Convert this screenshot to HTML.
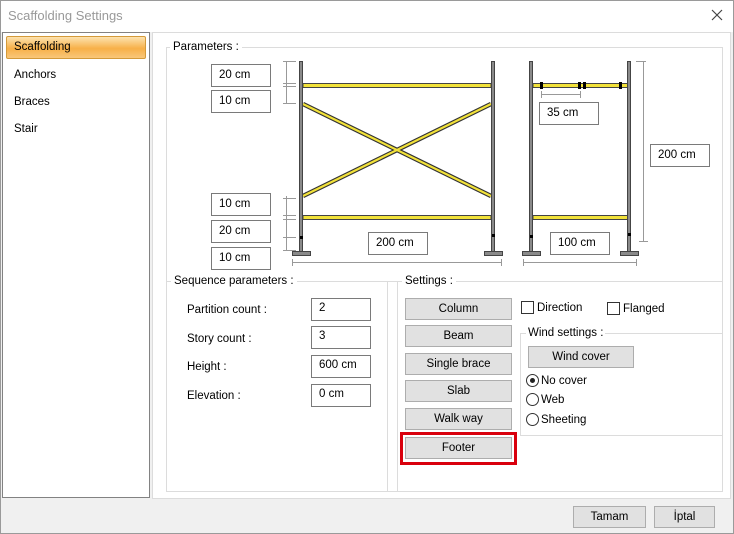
<!DOCTYPE html>
<html><head><style>
*{margin:0;padding:0;box-sizing:border-box}
body{width:734px;height:534px;overflow:hidden;font-family:"Liberation Sans",sans-serif;font-size:11.5px;color:#000;background:#f0f0f0;position:relative}
.a{position:absolute}
.title{position:absolute;left:0;top:0;width:734px;height:32px;background:#fff}
.tb{position:absolute;background:#fff;border:1px solid #7a7a7a;padding:4px 0 0 7px;height:23px;font-size:11.5px}
.grp{position:absolute;border:1px solid #dcdcdc}
.btn{position:absolute;background:#e1e1e1;border:1px solid #adadad;text-align:center;font-size:11.5px}
.cb{position:absolute;width:13px;height:13px;border:1px solid #333;background:#fff}
.rd{position:absolute;width:13px;height:13px;border:1px solid #333;border-radius:50%;background:#fff}
</style></head><body>
<div class="title"></div>
<div class="a" style="left:8px;top:8px;font-size:13px;color:#999">Scaffolding Settings</div>
<svg class="a" style="left:711px;top:9px" width="12" height="12"><path d="M1 1L11 11M11 1L1 11" stroke="#444" stroke-width="1.2"/></svg>
<!-- left list -->
<div class="a" style="left:2px;top:32px;width:148px;height:466px;background:#fff;border:1px solid #828282"></div>
<div class="a" style="left:6px;top:36px;width:140px;height:23px;border:1px solid #d49a3a;border-radius:2px;background:linear-gradient(#fde3b0,#f7b048 55%,#f9c77a)"></div>
<div class="a" style="left:14px;top:41px">Scaffolding</div>
<div class="a" style="left:14px;top:69px">Anchors</div>
<div class="a" style="left:14px;top:96px">Braces</div>
<div class="a" style="left:14px;top:123px">Stair</div>
<!-- right panel -->
<div class="a" style="left:152px;top:32px;width:579px;height:467px;background:#fff;border:1px solid #dcdcdc"></div>
<div class="grp" style="left:166px;top:47px;width:557px;height:445px"></div>
<div class="a" style="left:170px;top:41px;background:#fff;padding:0 3px">Parameters :</div>
<div class="a" style="left:166px;top:281px;width:557px;height:1px;background:#dcdcdc"></div>
<div class="a" style="left:387px;top:281px;width:1px;height:211px;background:#dcdcdc"></div>
<div class="a" style="left:397px;top:281px;width:1px;height:211px;background:#dcdcdc"></div>
<div class="a" style="left:171px;top:275px;background:#fff;padding:0 3px">Sequence parameters :</div>
<div class="a" style="left:402px;top:275px;background:#fff;padding:0 3px">Settings :</div>

<svg class="a" style="left:0;top:0" width="734" height="534">
<g stroke="#999" stroke-width="1" fill="none">
<line x1="286.5" y1="61" x2="286.5" y2="104"/><line x1="286.5" y1="196" x2="286.5" y2="251"/>
<line x1="283" y1="61.5" x2="296" y2="61.5"/><line x1="283" y1="83.5" x2="296" y2="83.5"/><line x1="283" y1="86.5" x2="296" y2="86.5"/><line x1="283" y1="103.5" x2="296" y2="103.5"/>
<line x1="283" y1="198.5" x2="296" y2="198.5"/><line x1="283" y1="215.5" x2="296" y2="215.5"/><line x1="283" y1="219.5" x2="296" y2="219.5"/><line x1="283" y1="237.5" x2="296" y2="237.5"/><line x1="283" y1="250.5" x2="296" y2="250.5"/>
<line x1="292" y1="262.5" x2="502" y2="262.5"/><line x1="292.5" y1="259" x2="292.5" y2="266"/><line x1="501.5" y1="259" x2="501.5" y2="266"/>
<line x1="523" y1="262.5" x2="637" y2="262.5"/><line x1="523.5" y1="259" x2="523.5" y2="266"/><line x1="636.5" y1="259" x2="636.5" y2="266"/>
<line x1="643.5" y1="61" x2="643.5" y2="242"/><line x1="636" y1="61.5" x2="646" y2="61.5"/><line x1="639" y1="241.5" x2="648" y2="241.5"/>
<line x1="541" y1="94.5" x2="581" y2="94.5"/><line x1="541.5" y1="91" x2="541.5" y2="98"/><line x1="580.5" y1="91" x2="580.5" y2="98"/>
</g>
<g stroke="#333" stroke-width="4.5"><line x1="303" y1="104" x2="491" y2="196"/><line x1="303" y1="196" x2="491" y2="104"/></g>
<g stroke="#f2e23a" stroke-width="2.2"><line x1="303" y1="104" x2="491" y2="196"/><line x1="303" y1="196" x2="491" y2="104"/></g>
<g fill="#f2e23a" stroke="#444" stroke-width="1">
<rect x="303" y="83.5" width="188" height="4"/><rect x="303" y="215.5" width="188" height="4"/>
<rect x="533" y="83.5" width="95" height="4"/><rect x="533" y="215.5" width="95" height="4"/>
</g>
<g fill="#8a8a8a" stroke="#444" stroke-width="1">
<rect x="299.5" y="61.5" width="3" height="191"/><rect x="491.5" y="61.5" width="3" height="191"/>
<rect x="529.5" y="61.5" width="3" height="191"/><rect x="627.5" y="61.5" width="3" height="191"/>
<rect x="292.5" y="251.5" width="18" height="4"/><rect x="484.5" y="251.5" width="18" height="4"/>
<rect x="522.5" y="251.5" width="18" height="4"/><rect x="620.5" y="251.5" width="18" height="4"/>
</g>
<g fill="#000"><rect x="300" y="236" width="3" height="3"/><rect x="492" y="234" width="3" height="3"/><rect x="530" y="235" width="3" height="3"/><rect x="628" y="233" width="3" height="3"/>
<rect x="540" y="82" width="3" height="7"/><rect x="578" y="82" width="3" height="7"/><rect x="583" y="82" width="3" height="7"/><rect x="619" y="82" width="3" height="7"/></g>
</svg>

<div class="tb" style="left:211px;top:64px;width:60px">20 cm</div>
<div class="tb" style="left:211px;top:90px;width:60px">10 cm</div>
<div class="tb" style="left:211px;top:193px;width:60px">10 cm</div>
<div class="tb" style="left:211px;top:220px;width:60px">20 cm</div>
<div class="tb" style="left:211px;top:247px;width:60px">10 cm</div>
<div class="tb" style="left:368px;top:232px;width:60px">200 cm</div>
<div class="tb" style="left:539px;top:102px;width:60px">35 cm</div>
<div class="tb" style="left:650px;top:144px;width:60px">200 cm</div>
<div class="tb" style="left:550px;top:232px;width:60px">100 cm</div>

<div class="a" style="left:187px;top:304px">Partition count :</div>
<div class="a" style="left:187px;top:333px">Story count :</div>
<div class="a" style="left:187px;top:361px">Height :</div>
<div class="a" style="left:187px;top:390px">Elevation :</div>
<div class="tb" style="left:311px;top:298px;width:60px;padding-top:3px">2</div>
<div class="tb" style="left:311px;top:326px;width:60px;padding-top:3px">3</div>
<div class="tb" style="left:311px;top:355px;width:60px;padding-top:3px">600 cm</div>
<div class="tb" style="left:311px;top:384px;width:60px;padding-top:3px">0 cm</div>

<div class="btn" style="left:405px;top:298px;width:107px;height:22px;padding-top:4px">Column</div>
<div class="btn" style="left:405px;top:325px;width:107px;height:22px;padding-top:4px">Beam</div>
<div class="btn" style="left:405px;top:353px;width:107px;height:22px;padding-top:4px">Single brace</div>
<div class="btn" style="left:405px;top:380px;width:107px;height:22px;padding-top:4px">Slab</div>
<div class="btn" style="left:405px;top:408px;width:107px;height:22px;padding-top:4px">Walk way</div>
<div class="a" style="left:400px;top:432px;width:117px;height:33px;border:3px solid #d9000d"></div>
<div class="btn" style="left:405px;top:437px;width:107px;height:22px;padding-top:4px">Footer</div>

<div class="cb" style="left:521px;top:301px"></div><div class="a" style="left:537px;top:302px">Direction</div>
<div class="cb" style="left:607px;top:302px"></div><div class="a" style="left:623px;top:303px">Flanged</div>
<div class="a" style="left:520px;top:333px;width:203px;height:103px;border:1px solid #dcdcdc;border-right:none"></div>
<div class="a" style="left:526px;top:327px;background:#fff;padding:0 2px">Wind settings :</div>
<div class="btn" style="left:528px;top:346px;width:106px;height:22px;padding-top:4px">Wind cover</div>
<div class="rd" style="left:526px;top:374px"></div><div class="a" style="left:530px;top:378px;width:5px;height:5px;border-radius:50%;background:#222"></div>
<div class="a" style="left:541px;top:375px">No cover</div>
<div class="rd" style="left:526px;top:393px"></div><div class="a" style="left:541px;top:394px">Web</div>
<div class="rd" style="left:526px;top:413px"></div><div class="a" style="left:541px;top:414px">Sheeting</div>

<div class="btn" style="left:573px;top:506px;width:73px;height:22px;padding-top:4px">Tamam</div>
<div class="btn" style="left:654px;top:506px;width:61px;height:22px;padding-top:4px">İptal</div>
<div class="a" style="left:0;top:0;width:734px;height:534px;border:1px solid #9a9a9a;pointer-events:none"></div>
</body></html>
